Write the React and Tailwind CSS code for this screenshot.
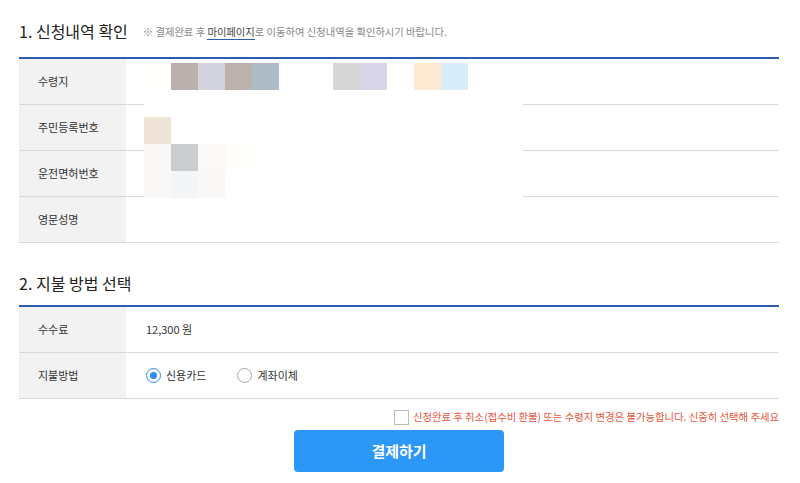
import { useState } from "react";

const font = { fontFamily: '"Noto Sans CJK KR", "Noto Sans", sans-serif' };

// redaction mosaic blocks, 14 x 5 cells of 27px
const mosaic = [
    ["bg-[#fffffd]", "bg-[#bab0ad]", "bg-[#d4d4de]", "bg-[#bdb1ab]", "bg-[#adbcc7]", "bg-white", "bg-white", "bg-[#d6d6d6]", "bg-[#d7d5e7]", "bg-[#fffffe]", "bg-[#fbe9d2]", "bg-[#d8edf8]", "bg-white", "bg-white"],
    ["bg-white", "bg-white", "bg-white", "bg-white", "bg-white", "bg-white", "bg-white", "bg-white", "bg-white", "bg-white", "bg-white", "bg-white", "bg-white", "bg-white"],
    ["bg-[#f0e4d8]", "bg-white", "bg-white", "bg-white", "bg-white", "bg-white", "bg-white", "bg-white", "bg-white", "bg-white", "bg-white", "bg-white", "bg-white", "bg-white"],
    ["bg-[#faf8f6]", "bg-[#cbcccd]", "bg-[#faf9f7]", "bg-[#fffefb]", "bg-white", "bg-white", "bg-white", "bg-white", "bg-white", "bg-white", "bg-white", "bg-white", "bg-white", "bg-white"],
    ["bg-[#faf8f6]", "bg-[#f4f5f7]", "bg-[#faf8f6]", "bg-white", "bg-white", "bg-white", "bg-white", "bg-white", "bg-white", "bg-white", "bg-white", "bg-white", "bg-white", "bg-white"],
];

function Row({ label, children }) {
    return (
        <div className="flex h-[46px] border-b border-[#d9d9d9]">
            <div className="w-[107px] bg-[#f2f2f2] flex items-center pl-[19px] text-[11px] text-[#333]">{label}</div>
            <div className="flex-1 flex items-center pl-[20px] text-[11px] text-[#333]">{children}</div>
        </div>
    );
}

function Radio({ checked, label, onClick }) {
    return (
        <button className="flex items-center gap-[5px] text-[11px] text-[#333]" onClick={onClick}>
            <span className={`w-[15px] h-[15px] rounded-full border flex items-center justify-center ${checked ? "border-[#2a8ef2]" : "border-[#aaa]"}`}>
                {checked && <span className="w-[7px] h-[7px] rounded-full bg-[#2a8ef2]" />}
            </span>
            {label}
        </button>
    );
}

export default function App() {
    const [method, setMethod] = useState("card");
    const [agree, setAgree] = useState(false);

    return (
        <div className="w-[800px] h-[483px] bg-white px-[19px] pt-[18px]" style={font}>
            <div className="w-[760px]">
                {/* section 1 */}
                <div className="flex items-center h-[26px] mb-[13px]">
                    <h2 className="text-[16px] text-[#222]">1. 신청내역 확인</h2>
                    <p className="ml-[15px] text-[10.3px] text-[#888] mt-[2px]">
                        ※ 결제완료 후 <span className="text-[#444] border-b border-[#2a5db0]">마이페이지</span>로 이동하여 신청내역을 확인하시기 바랍니다.
                    </p>
                </div>

                <div className="relative border-t-2 border-[#2c5db0]">
                    <Row label="수령지" />
                    <Row label="주민등록번호" />
                    <Row label="운전면허번호" />
                    <Row label="영문성명" />

                    {/* redaction overlay */}
                    <div className="absolute left-[125px] top-0 w-[379px] h-[139px] bg-white pt-[4px]">
                        {mosaic.map((row, i) => (
                            <div key={i} className="flex">
                                {row.map((c, j) => (
                                    <div key={j} className={`w-[27px] h-[27px] ${c}`} />
                                ))}
                            </div>
                        ))}
                    </div>
                </div>

                {/* section 2 */}
                <div className="flex items-center h-[26px] mt-[27px] mb-[9px]">
                    <h2 className="text-[16px] text-[#222]">2. 지불 방법 선택</h2>
                </div>

                <div className="border-t-2 border-[#2c5db0]">
                    <Row label="수수료">12,300 원</Row>
                    <Row label="지불방법">
                        <div className="flex items-center gap-[31px]">
                            <Radio checked={method === "card"} label="신용카드" onClick={() => setMethod("card")} />
                            <Radio checked={method === "bank"} label="계좌이체" onClick={() => setMethod("bank")} />
                        </div>
                    </Row>
                </div>

                <label className="flex items-center justify-end gap-[4px] mt-[10px] h-[16px] cursor-pointer">
                    <span
                        className={`w-[15px] h-[15px] border border-[#bbb] ${agree ? "bg-[#2a8ef2]" : "bg-white"}`}
                        onClick={() => setAgree(!agree)}
                    />
                    <span className="text-[10.35px] text-[#e8583c]">신청완료 후 취소(접수비 환불) 또는 수령지 변경은 불가능합니다. 신중히 선택해 주세요</span>
                </label>

                <div className="flex justify-center mt-[5px]">
                    <button className="w-[210px] h-[42px] rounded-[4px] bg-[#2b97f7] text-white text-[15px] font-bold">결제하기</button>
                </div>
            </div>
        </div>
    );
}
